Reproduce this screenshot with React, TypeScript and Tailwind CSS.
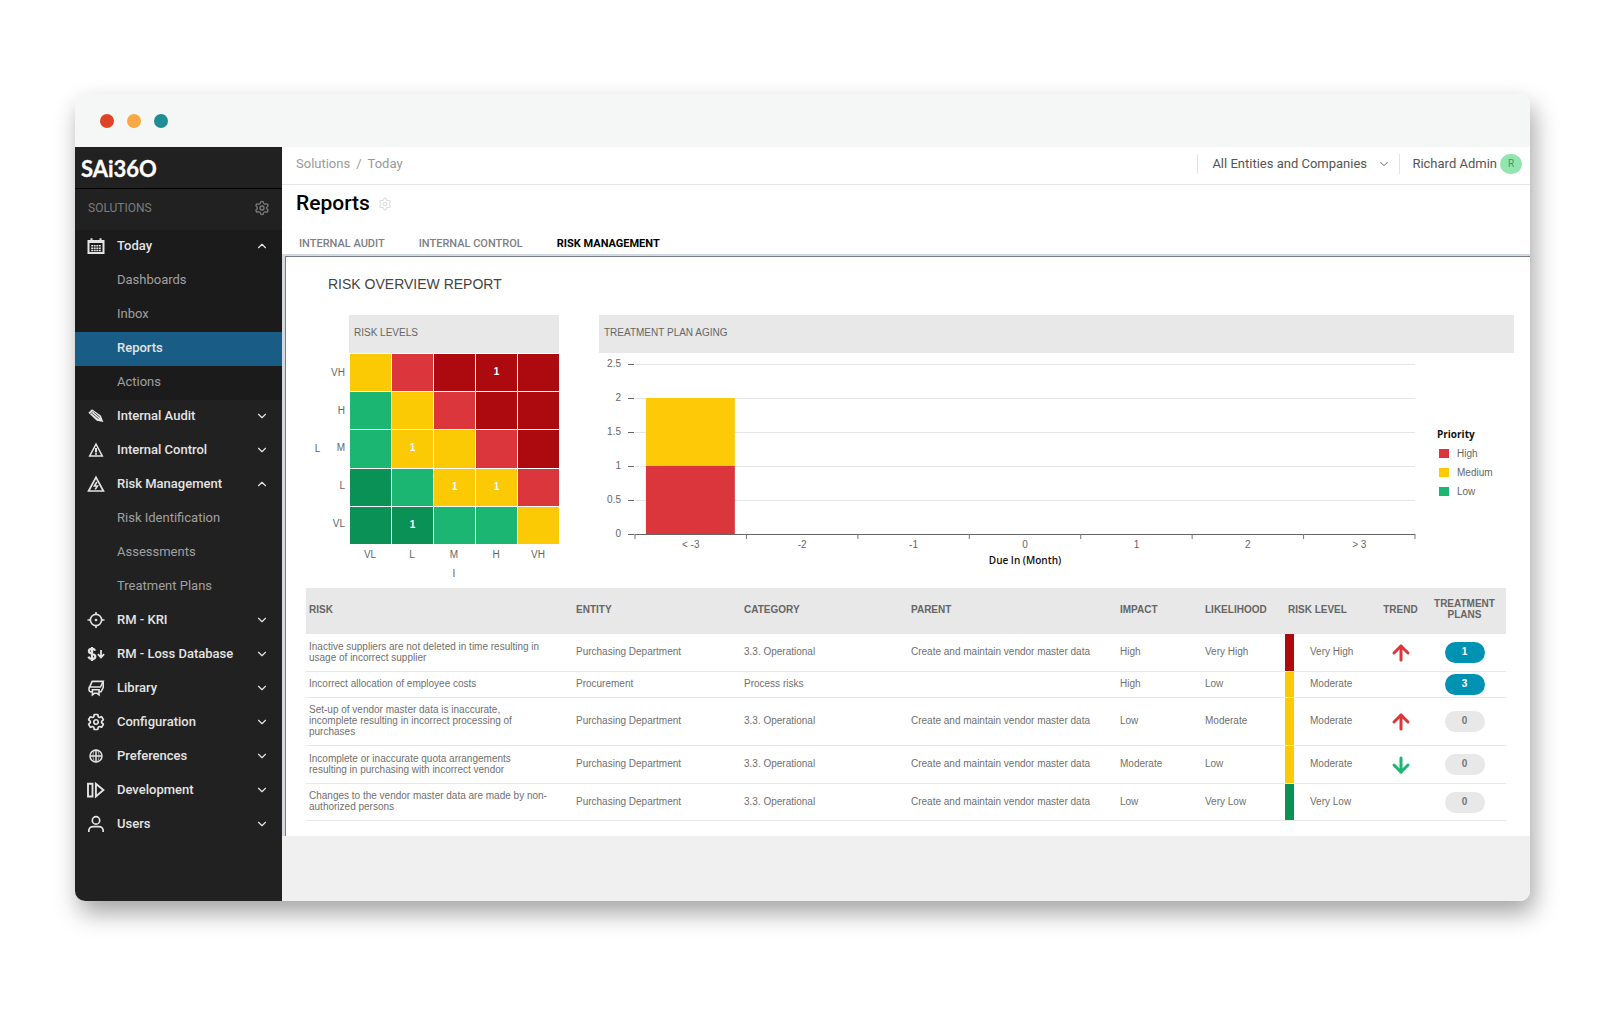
import React, { useState } from 'react';
import { ArrowDown, ArrowUp, ChevronDown, ChevronUp, Settings } from 'lucide-react';
import { IoSettingsOutline } from 'react-icons/io5';

const CalendarIcon = () => (
  <svg viewBox="0 0 18 18" className="w-[18px] h-[18px]" fill="none" stroke="currentColor">
    <path d="M1.5 4h15v12h-15z" strokeWidth="2" />
    <path d="M4.5 1.2v3M13.5 1.2v3M1.5 5h15" strokeWidth="2" />
    <path d="M4.2 8.700h9.600M4.200 11.200h9.600M4.200 13.600h9.600" strokeWidth="1.5" strokeDasharray="1.9 .67" />
  </svg>
);

const PencilIcon = () => (
  <svg viewBox="0 0 18 18" className="w-[18px] h-[18px]" fill="none" stroke="currentColor">
    <path d="M1.4 5.8 5 2.2l8.8 6.4 2.6 6.4-6.6-1.2z" fill="currentColor" stroke="none" />
    <path d="M5 6.4l6.6 5.4M6.8 5.2l6 5" stroke="#212121" strokeWidth=".7" />
    <path d="M3.2 7.2l3-3" stroke="#212121" strokeWidth=".7" />
  </svg>
);

const ControlIcon = () => (
  <svg viewBox="0 0 18 18" className="w-[18px] h-[18px]" fill="none" stroke="currentColor" strokeWidth="1.5">
    <path d="M9 3.2 15.3 15H2.7z" />
    <path d="M9 7v4.4M9 12.3v1.4" strokeWidth="2" />
  </svg>
);

const RiskIcon = () => (
  <svg viewBox="0 0 18 18" className="w-[18px] h-[18px]" fill="none" stroke="currentColor" strokeWidth="1.7">
    <path d="M9 2.4 16.4 16H1.6z" />
    <path d="M9.9 7 7.4 11h3L8.2 14.4" strokeWidth="1.6" />
  </svg>
);

const TargetIcon = () => (
  <svg viewBox="0 0 18 18" className="w-[18px] h-[18px]" fill="none" stroke="currentColor" strokeWidth="1.6">
    <circle cx="9" cy="9" r="5.6" />
    <path d="M9 1v3M9 14v3M.5 9H4M14 9h3.5" />
    <circle cx="9" cy="9" r="1.3" fill="currentColor" stroke="none" />
  </svg>
);

const LossIcon = () => (
  <svg viewBox="0 0 18 18" className="w-[18px] h-[18px]" fill="none" stroke="currentColor" strokeWidth="1.8">
    <path
      d="M8.2 5.6C7.6 4.3 6.5 3.9 5 3.9 3 3.9 1.9 4.8 1.9 6.2c0 3.3 6.4 1.8 6.4 5.2 0 1.5-1.3 2.5-3.3 2.5-1.8 0-3-.7-3.6-2.2M5 2v14"
      strokeWidth="2.2"
    />
    <path d="M14 5v7.4M10.9 9.2 14 12.4l3.1-3.2" />
  </svg>
);

const LibraryIcon = () => (
  <svg viewBox="0 0 18 18" className="w-[18px] h-[18px]" fill="none" stroke="currentColor" strokeWidth="1.6">
    <path d="M5.2 2.4h11L13.5 8H2.6z" />
    <path d="M2.6 8c-1 1.8-.8 4.6.8 4.8h1.8M16.2 2.4v6.2L14 12.8h-2" />
    <path d="M5.4 10.8h6.6v5l-1.8-1.500H7.400l-2 1.500z" />
  </svg>
);

const GlobeIcon = () => (
  <svg viewBox="0 0 18 18" className="w-[18px] h-[18px]" fill="none" stroke="currentColor" strokeWidth="1.5">
    <circle cx="9" cy="9" r="6" />
    <ellipse cx="9" cy="9" rx="3" ry="6" strokeWidth=".7" />
    <path d="M9 3v12M3 9h12" />
  </svg>
);

const DevelopmentIcon = () => (
  <svg viewBox="0 0 18 18" className="w-[18px] h-[18px]" fill="none" stroke="currentColor" strokeWidth="1.9">
    <path d="M1 2.7h4.5v12.8H1zM8.9 2.7v12.8L16.4 9z" />
  </svg>
);

const UserIcon = () => (
  <svg viewBox="0 0 18 18" className="w-[18px] h-[18px]" fill="none" stroke="currentColor" strokeWidth="1.7">
    <circle cx="9" cy="5.4" r="3.7" />
    <path d="M1.8 17v-1.2c0-2.6 2-4.2 4.4-4.2h5.6c2.4 0 4.4 1.6 4.4 4.2V17" />
  </svg>
);

const GearIcon = () => <IoSettingsOutline className="w-[18px] h-[18px] [&_path]:[stroke-width:48]" />;

const menu = [
  { label: 'Today', icon: CalendarIcon, items: ['Dashboards', 'Inbox', 'Reports', 'Actions'] },
  { label: 'Internal Audit', icon: PencilIcon, items: [] },
  { label: 'Internal Control', icon: ControlIcon, items: [] },
  { label: 'Risk Management', icon: RiskIcon, items: ['Risk Identification', 'Assessments', 'Treatment Plans'] },
  { label: 'RM - KRI', icon: TargetIcon, items: [] },
  { label: 'RM - Loss Database', icon: LossIcon, items: [] },
  { label: 'Library', icon: LibraryIcon, items: [] },
  { label: 'Configuration', icon: GearIcon, items: [] },
  { label: 'Preferences', icon: GlobeIcon, items: [] },
  { label: 'Development', icon: DevelopmentIcon, items: [] },
  { label: 'Users', icon: UserIcon, items: [] },
];

const tabs = ['INTERNAL AUDIT', 'INTERNAL CONTROL', 'RISK MANAGEMENT'];

const levelColors: Record<string, string> = {
  VH: 'bg-[#ad0a10]',
  H: 'bg-[#da363b]',
  M: 'bg-[#fcc905]',
  L: 'bg-[#1cb673]',
  VL: 'bg-[#0a9155]',
};

const scale = ['VL', 'L', 'M', 'H', 'VH'];

const matrix = [
  { label: 'VH', cells: ['M', 'H', 'VH', 'VH', 'VH'], counts: [0, 0, 0, 1, 0] },
  { label: 'H', cells: ['L', 'M', 'H', 'VH', 'VH'], counts: [0, 0, 0, 0, 0] },
  { label: 'M', cells: ['L', 'M', 'M', 'H', 'VH'], counts: [0, 1, 0, 0, 0] },
  { label: 'L', cells: ['VL', 'L', 'M', 'M', 'H'], counts: [0, 0, 1, 1, 0] },
  { label: 'VL', cells: ['VL', 'VL', 'L', 'L', 'M'], counts: [0, 1, 0, 0, 0] },
];

const months = ['< -3', '-2', '-1', '0', '1', '2', '> 3'];
const yTicks = [2.5, 2, 1.5, 1, 0.5, 0];

const legend = [
  { label: 'High', color: 'bg-[#da363b]' },
  { label: 'Medium', color: 'bg-[#fec907]' },
  { label: 'Low', color: 'bg-[#1cb673]' },
];

const columns = [
  { label: 'RISK', width: 'w-[267px]' },
  { label: 'ENTITY', width: 'w-[168px]' },
  { label: 'CATEGORY', width: 'w-[167px]' },
  { label: 'PARENT', width: 'w-[209px]' },
  { label: 'IMPACT', width: 'w-[85px]' },
  { label: 'LIKELIHOOD', width: 'w-[83px]' },
];

const risks = [
  {
    risk: 'Inactive suppliers are not deleted in time resulting in usage of incorrect supplier',
    entity: 'Purchasing Department',
    category: '3.3. Operational',
    parent: 'Create and maintain vendor master data',
    impact: 'High',
    likelihood: 'Very High',
    level: 'Very High',
    color: 'bg-[#ad0a10]',
    trend: 'up',
    plans: 1,
    height: 'h-[38px]',
  },
  {
    risk: 'Incorrect allocation of employee costs',
    entity: 'Procurement',
    category: 'Process risks',
    parent: '',
    impact: 'High',
    likelihood: 'Low',
    level: 'Moderate',
    color: 'bg-[#fec907]',
    trend: '',
    plans: 3,
    height: 'h-[26px]',
  },
  {
    risk: 'Set-up of vendor master data is inaccurate, incomplete resulting in incorrect processing of purchases',
    entity: 'Purchasing Department',
    category: '3.3. Operational',
    parent: 'Create and maintain vendor master data',
    impact: 'Low',
    likelihood: 'Moderate',
    level: 'Moderate',
    color: 'bg-[#fec907]',
    trend: 'up',
    plans: 0,
    height: 'h-[48px]',
  },
  {
    risk: 'Incomplete or inaccurate quota arrangements resulting in purchasing with incorrect vendor',
    entity: 'Purchasing Department',
    category: '3.3. Operational',
    parent: 'Create and maintain vendor master data',
    impact: 'Moderate',
    likelihood: 'Low',
    level: 'Moderate',
    color: 'bg-[#fec907]',
    trend: 'down',
    plans: 0,
    height: 'h-[38px]',
  },
  {
    risk: 'Changes to the vendor master data are made by non-authorized persons',
    entity: 'Purchasing Department',
    category: '3.3. Operational',
    parent: 'Create and maintain vendor master data',
    impact: 'Low',
    likelihood: 'Very Low',
    level: 'Very Low',
    color: 'bg-[#0a9155]',
    trend: '',
    plans: 0,
    height: 'h-[37px]',
  },
];

function Logo() {
  return (
    <svg viewBox="0 0 90 28" className="w-[90px] h-7" role="img" aria-label="SAI360">
      <text
        x="0"
        y="22"
        fill="#fff"
        stroke="#fff"
        strokeWidth=".3"
        fontFamily="Lato, sans-serif"
        fontWeight="700"
        fontSize="22"
      >
        SAi36O
      </text>
    </svg>
  );
}

function Sidebar() {
  const [open, setOpen] = useState(['Today', 'Risk Management']);

  const toggle = (label: string) =>
    setOpen(open.includes(label) ? open.filter((l) => l !== label) : [...open, label]);

  return (
    <aside className="w-[207px] shrink-0 bg-[#212121]">
      <div className="h-[42px] pl-1.5 pt-2 border-b border-black">
        <Logo />
      </div>
      <div className="h-[41px] pl-[13px] pr-3 pb-1 flex items-center justify-between text-[#7d7d7d]">
        <span className="text-xs">SOLUTIONS</span>
        <button aria-label="Solution settings">
          <Settings className="w-4 h-4" />
        </button>
      </div>
      <nav>
        {menu.map((group) => {
          const Icon = group.icon;
          const isOpen = open.includes(group.label);
          const Chevron = isOpen ? ChevronUp : ChevronDown;
          return (
            <div key={group.label} className={group.label === 'Today' ? 'bg-[#1b1b1b]' : ''}>
              <button
                onClick={() => toggle(group.label)}
                aria-expanded={isOpen}
                className="w-full h-[34px] pl-3 pr-[13px] pb-0.5 flex items-center text-[#e4e4e4]"
              >
                <Icon />
                <span className="ml-3 text-[13px] font-medium">{group.label}</span>
                <Chevron className="w-3.5 h-3.5 ml-auto" />
              </button>
              {isOpen &&
                group.items.map((item) => (
                  <a
                    key={item}
                    href="#"
                    className={`h-[34px] pl-[42px] pb-0.5 flex items-center text-[13px] ${
                      item === 'Reports' ? 'bg-[#195d86] text-[#e4e4e4] font-medium' : 'text-[#a0a0a0]'
                    }`}
                  >
                    {item}
                  </a>
                ))}
            </div>
          );
        })}
      </nav>
    </aside>
  );
}

function TopBar() {
  return (
    <header className="h-[38px] pl-3.5 pr-2 pb-1 border-b border-[#e6e6e6] flex items-center justify-between bg-white">
      <nav aria-label="Breadcrumb" className="flex gap-1.5 text-[13px] text-[#9a9a9a]">
        <a href="#">Solutions</a>
        <span>/</span>
        <a href="#">Today</a>
      </nav>
      <div className="flex items-center text-[13px] text-[#555]">
        <div className="relative h-5 border-l border-[#e2e2e2] flex items-center">
          <select aria-label="Entities and companies" className="appearance-none w-[201px] pl-3.5 bg-transparent">
            <option>All Entities and Companies</option>
          </select>
          <ChevronDown className="absolute right-2 w-3.5 h-3.5 pointer-events-none" strokeWidth={1.5} />
        </div>
        <button className="h-5 pl-3 border-l border-[#e2e2e2] flex items-center gap-[3px]">
          Richard Admin
          <span className="w-[22px] h-5 rounded-full bg-[#93e5b0] text-[#3f9a60] text-[10px] flex items-center justify-center">
            R
          </span>
        </button>
      </div>
    </header>
  );
}

function RiskLevels() {
  return (
    <section className="w-[253px] shrink-0 text-[10px] text-[#666]">
      <h3 className="ml-[43px] h-[38px] pl-[5px] pb-0.5 flex items-center bg-[#e8e8e8] leading-3">RISK LEVELS</h3>
      <div className="flex pt-px">
        <div className="w-[23px] pb-0.5 flex items-center justify-center">L</div>
        <div className="w-5 h-[190px] pr-1 pb-0.5 grid grid-rows-5 items-center text-right">
          {matrix.map((row) => (
            <span key={row.label}>{row.label}</span>
          ))}
        </div>
        <div className="flex-1 h-[190px] pl-px grid grid-cols-5 grid-rows-5 gap-px">
          {matrix.map((row) =>
            row.cells.map((level, i) => (
              <div
                key={row.label + i}
                className={`pb-0.5 flex items-center justify-center text-white font-bold ${levelColors[level]}`}
              >
                {row.counts[i] || ''}
              </div>
            ))
          )}
        </div>
      </div>
      <div className="ml-[43px] pt-[5px] grid grid-cols-5 text-center leading-3">
        {scale.map((label) => (
          <span key={label}>{label}</span>
        ))}
      </div>
      <p className="ml-[43px] mt-[7px] text-center leading-3">I</p>
    </section>
  );
}

function TreatmentPlanAging() {
  // zero line sits at 181, every half plan is 34px
  const y = (value: number) => 181 - value * 68;
  const x = (index: number) => `${(index / 7) * 100}%`;

  return (
    <section className="flex-1 min-w-0 text-[10px] text-[#666]">
      <h3 className="h-[38px] pl-[5px] pb-0.5 flex items-center bg-[#e8e8e8] leading-3">TREATMENT PLAN AGING</h3>
      <div className="flex pl-9">
        <svg className="flex-1 min-w-0 h-[217px] overflow-visible" fill="#666">
          {yTicks.map((tick) => (
            <g key={tick}>
              <line x1="0" x2="100%" y1={y(tick) + 0.5} y2={y(tick) + 0.5} stroke="#e6e6e6" />
              <line x1="-7" x2="-1" y1={y(tick) + 0.5} y2={y(tick) + 0.5} stroke="#666" />
              <text x="-14" y={y(tick) + 3} textAnchor="end">{tick}</text>
            </g>
          ))}
          <rect x="1.4%" y={y(2)} width="11.4%" height="68" fill="#fec907" />
          <rect x="1.4%" y={y(1)} width="11.4%" height="68" fill="#da363b" />
          <line x1="0" x2="100%" y1="181.5" y2="181.5" stroke="#666" />
          {[0, 1, 2, 3, 4, 5, 6, 7].map((i) => (
            <line key={i} x1={x(i)} x2={x(i)} y1="181" y2="186" stroke="#777" />
          ))}
          {months.map((month, i) => (
            <text key={month} x={x(i + 0.5)} y="195" textAnchor="middle">{month}</text>
          ))}
          <text x="50%" y="211" textAnchor="middle" fill="#111" className="font-[Open_Sans] font-semibold">
            Due In (Month)
          </text>
        </svg>
        <div className="w-[99px] pl-[22px] pt-[75px]">
          <p className="text-[#111] font-[Open_Sans] font-bold leading-3">Priority</p>
          <ul className="mt-1 pl-0.5">
            {legend.map((item) => (
              <li key={item.label} className="h-[19px] flex items-center gap-2">
                <span className={`w-2.5 h-[9px] ${item.color}`} />
                {item.label}
              </li>
            ))}
          </ul>
        </div>
      </div>
    </section>
  );
}

function RiskTable() {
  return (
    <table className="w-full table-fixed border-separate border-spacing-0 text-left text-[10px] leading-[11px] text-[#707070]">
      <thead>
        <tr className="h-[46px] bg-[#e8e8e8] text-[#666]">
          {columns.map((col) => (
            <th key={col.label} scope="col" className={`${col.width} pl-[3px] pb-1`}>
              {col.label}
            </th>
          ))}
          <th scope="col" className="w-[9px] pb-1" aria-label="Level colour" />
          <th scope="col" className="w-[84px] pb-1">
            <span className="-ml-1.5">RISK LEVEL</span>
          </th>
          <th scope="col" className="w-[45px] pb-1 text-center">TREND</th>
          <th scope="col" className="w-[83px] px-2 pb-1 text-center">TREATMENT PLANS</th>
        </tr>
      </thead>
      <tbody>
        {risks.map((row) => (
          <tr key={row.risk} className={`${row.height} *:border-b *:border-[#e8e8e8]`}>
            <td className="pl-[3px] pr-6 pb-0.5">{row.risk}</td>
            <td className="pl-[3px] pb-0.5">{row.entity}</td>
            <td className="pl-[3px] pb-0.5">{row.category}</td>
            <td className="pl-[3px] pb-0.5">{row.parent}</td>
            <td className="pl-[3px] pb-0.5">{row.impact}</td>
            <td className="pl-[3px] pb-0.5">{row.likelihood}</td>
            <td className={row.color} />
            <td className="pl-4 pb-0.5">{row.level}</td>
            <td>
              {row.trend === 'up' && (
                <ArrowUp className="mx-auto w-6 h-6 text-[#da363b]" strokeWidth={3} aria-label="Up" />
              )}
              {row.trend === 'down' && (
                <ArrowDown className="mx-auto w-6 h-6 text-[#1cb673]" strokeWidth={3} aria-label="Down" />
              )}
            </td>
            <td>
              <button
                className={`mx-auto w-10 h-[21px] pb-0.5 rounded-full flex items-center justify-center font-bold ${
                  row.plans > 0 ? 'bg-[#0092b3] text-white' : 'bg-[#e8e8e8] text-[#777]'
                }`}
              >
                {row.plans}
              </button>
            </td>
          </tr>
        ))}
      </tbody>
    </table>
  );
}

export default function App() {
  const [activeTab, setActiveTab] = useState('RISK MANAGEMENT');

  return (
    <div className="min-h-screen bg-white pl-[75px] pr-[70px] pt-[94px] pb-[121px] font-[Roboto,sans-serif]">
      <div className="rounded-[10px] overflow-hidden shadow-[4px_12px_24px_rgba(0,0,0,0.36)]">
        <div className="h-[53px] pl-[25px] flex items-center gap-[13px] bg-[#f5f7f7]">
          <span className="w-3.5 h-3.5 rounded-full bg-[#dd4426]" />
          <span className="w-3.5 h-3.5 rounded-full bg-[#f8a845]" />
          <span className="w-3.5 h-3.5 rounded-full bg-[#218c93]" />
        </div>

        <div className="flex">
          <Sidebar />

          <main className="flex-1 min-w-0 bg-[#f0f0f1] pb-[65px]">
            <TopBar />

            <div className="bg-white">
              <div className="h-[38px] pl-3.5 flex items-center gap-2">
                <h1 className="text-[21px] font-medium text-black">Reports</h1>
                <button aria-label="Report settings" className="text-[#dedede]">
                  <Settings className="w-3.5 h-3.5" />
                </button>
              </div>
              <div
                role="tablist"
                className="h-[31px] pl-[17px] pt-[13px] flex items-start gap-[34px] text-[11px] leading-4 font-medium"
              >
                {tabs.map((tab) => (
                  <button
                    key={tab}
                    role="tab"
                    aria-selected={tab === activeTab}
                    onClick={() => setActiveTab(tab)}
                    className={tab === activeTab ? 'text-black font-bold' : 'text-[#808080]'}
                  >
                    {tab}
                  </button>
                ))}
              </div>
            </div>

            <div className="border-t-2 border-l-[3px] border-[#d4dae2]">
              <div className="border-t border-l border-[#767c8a] bg-white pl-5 pt-[17px] pb-[15px] font-['Liberation_Sans',sans-serif]">
                <h2 className="pl-[22px] text-sm text-[#444]">RISK OVERVIEW REPORT</h2>
                <div className="mt-[21px] pr-4 flex gap-10">
                  <RiskLevels />
                  <TreatmentPlanAging />
                </div>
                <div className="mt-2 pr-6">
                  <RiskTable />
                </div>
              </div>
            </div>
          </main>
        </div>
      </div>
    </div>
  );
}
